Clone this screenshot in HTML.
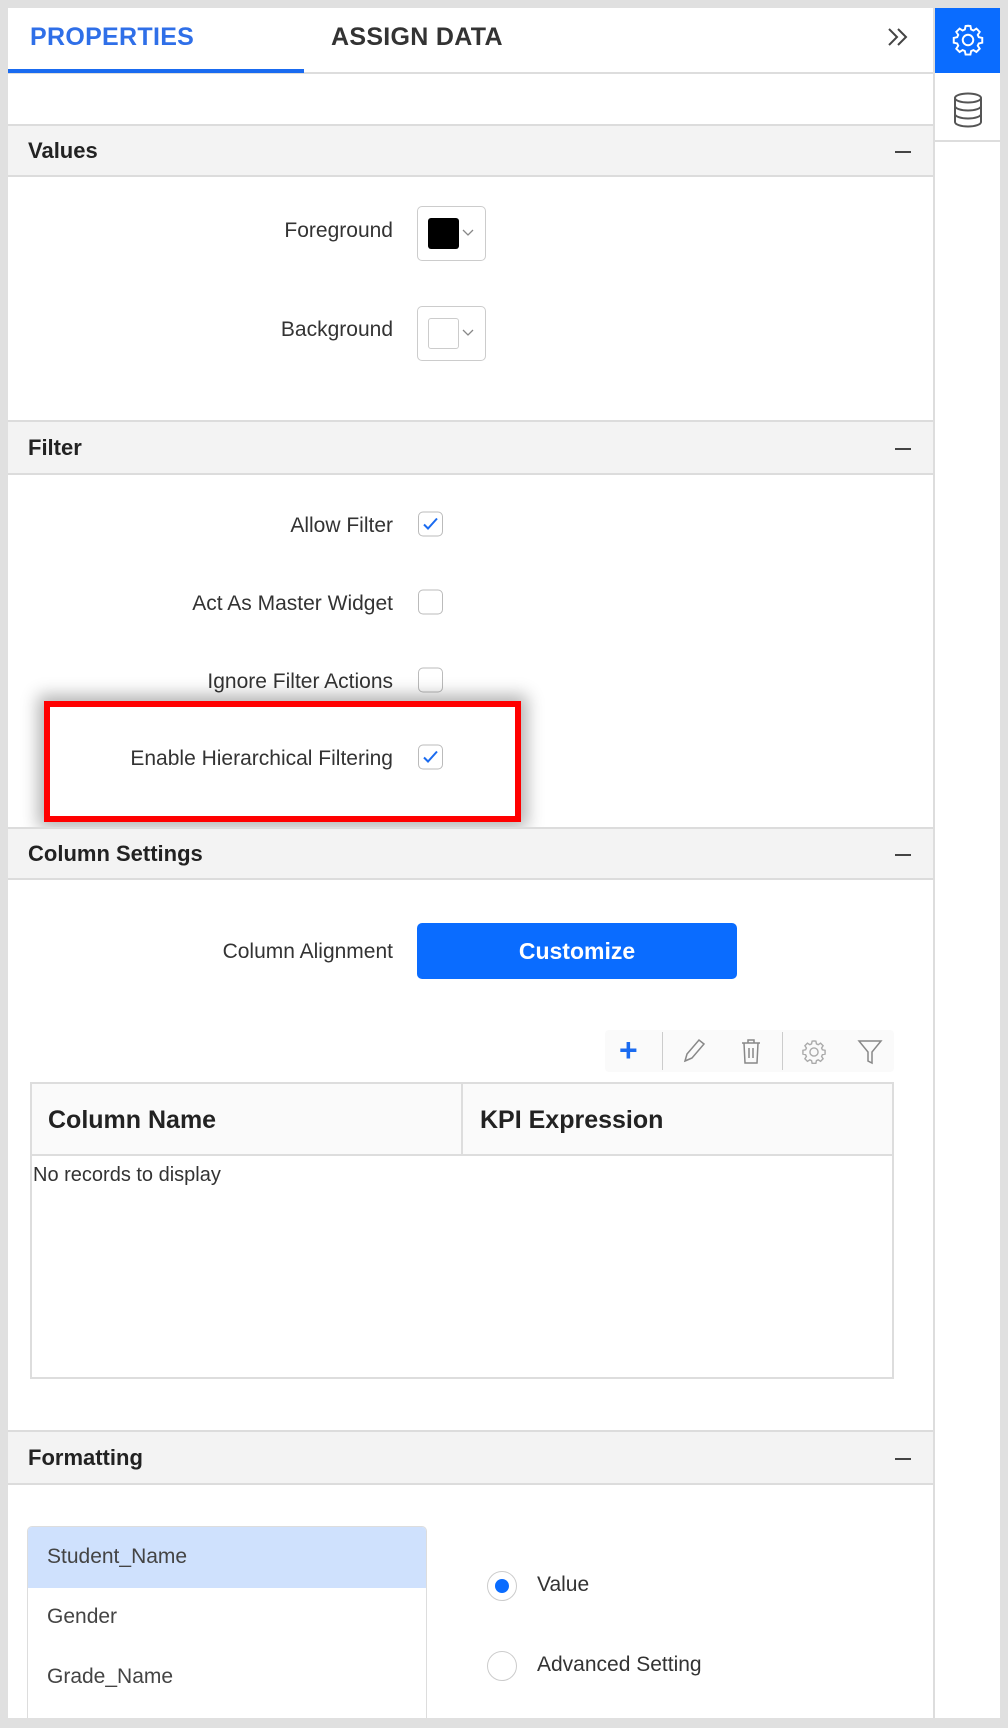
<!DOCTYPE html>
<html><head><meta charset="utf-8"><style>
*{box-sizing:border-box;margin:0;padding:0}
body{width:1008px;height:1728px;background:#e0e0e0;position:relative;overflow:hidden;font-family:"Liberation Sans",sans-serif;color:#333}
.a{position:absolute}
.panel{left:8px;top:8px;width:992px;height:1710px;background:#fff}
.hdr{position:absolute;left:8px;width:925px;background:#f3f3f3;border-top:2px solid #dcdcdc;border-bottom:2px solid #dcdcdc;font-weight:bold;font-size:22px;color:#222;padding-left:20px;display:flex;align-items:center}
.hdr:after{content:"";position:absolute;right:22px;top:50%;width:16px;height:2px;background:#444}
.lbl{position:absolute;right:615px;font-size:21px;color:#333;white-space:nowrap;transform:translateY(-50%)}
.cb{position:absolute;left:418px;width:25px;height:25px;border:1.5px solid #bbb;border-radius:5px;background:#fff;transform:translateY(-50%)}
.cb.on svg{position:absolute;left:3px;top:3px}
</style></head><body>
<div class="a panel"></div>
<!-- tabs -->
<div class="a" style="left:30px;top:23px;font-weight:bold;font-size:25px;color:#2f6fe8;letter-spacing:0.3px">PROPERTIES</div>
<div class="a" style="left:331px;top:23px;font-weight:bold;font-size:25px;color:#333;letter-spacing:0.3px">ASSIGN DATA</div>
<div class="a" style="left:8px;top:72px;width:925px;height:2px;background:#ddd"></div>
<div class="a" style="left:8px;top:69px;width:296px;height:4px;background:#1a6bf0"></div>
<svg class="a" style="left:886px;top:26px" width="26" height="22" viewBox="0 0 26 22"><path d="M3 3l8 8-8 8M12 3l8 8-8 8" fill="none" stroke="#444" stroke-width="2"/></svg>
<!-- sidebar -->
<div class="a" style="left:933px;top:8px;width:2px;height:1710px;background:#ddd"></div>
<div class="a" style="left:935px;top:8px;width:65px;height:65px;background:#0a6cff"></div>
<svg class="a" style="left:950px;top:22px" width="36" height="36" viewBox="0 0 24 24"><path d="M12 2.5l1.6.2.5 2.3 1.5.7 2-1.3 2.2 2.2-1.3 2 .7 1.5 2.3.5v3.2l-2.3.5-.7 1.5 1.3 2-2.2 2.2-2-1.3-1.5.7-.5 2.3h-3.2l-.5-2.3-1.5-.7-2 1.3-2.2-2.2 1.3-2-.7-1.5-2.3-.5v-3.2l2.3-.5.7-1.5-1.3-2 2.2-2.2 2 1.3 1.5-.7.5-2.3z" fill="none" stroke="#fff" stroke-width="1.3"/><circle cx="12" cy="12" r="3.5" fill="none" stroke="#fff" stroke-width="1.3"/></svg>
<svg class="a" style="left:952px;top:92px" width="32" height="36" viewBox="0 0 32 36"><ellipse cx="16" cy="6" rx="13" ry="4.5" fill="none" stroke="#555" stroke-width="2"/><path d="M3 6v24c0 2.5 6 4.5 13 4.5s13-2 13-4.5V6M3 14c0 2.5 6 4.5 13 4.5s13-2 13-4.5M3 22c0 2.5 6 4.5 13 4.5s13-2 13-4.5" fill="none" stroke="#555" stroke-width="2"/></svg>
<div class="a" style="left:935px;top:140px;width:65px;height:2px;background:#ddd"></div>

<!-- Values -->
<div class="hdr" style="top:124px;height:53px">Values</div>
<div class="lbl" style="top:231px">Foreground</div>
<div class="a" style="left:417px;top:206px;width:69px;height:55px;border:1.5px solid #ccc;border-radius:5px"></div>
<div class="a" style="left:428px;top:218px;width:31px;height:31px;background:#000;border-radius:3px"></div>
<svg class="a" style="left:461px;top:228px" width="14" height="10"><path d="M2 2l5 5 5-5" fill="none" stroke="#888" stroke-width="1.3"/></svg>
<div class="lbl" style="top:330px">Background</div>
<div class="a" style="left:417px;top:306px;width:69px;height:55px;border:1.5px solid #ccc;border-radius:5px"></div>
<div class="a" style="left:428px;top:318px;width:31px;height:31px;border:1.5px solid #ccc;border-radius:3px"></div>
<svg class="a" style="left:461px;top:328px" width="14" height="10"><path d="M2 2l5 5 5-5" fill="none" stroke="#888" stroke-width="1.3"/></svg>

<!-- Filter -->
<div class="hdr" style="top:420px;height:55px">Filter</div>
<div class="lbl" style="top:526px">Allow Filter</div>
<div class="cb on" style="top:524px"><svg width="17" height="17"><path d="M2 9l4 4 9-10" fill="none" stroke="#1a6bf0" stroke-width="2"/></svg></div>
<div class="lbl" style="top:604px">Act As Master Widget</div>
<div class="cb" style="top:602px"></div>
<div class="lbl" style="top:682px">Ignore Filter Actions</div>
<div class="cb" style="top:680px"></div>
<div class="a" style="left:44px;top:701px;width:477px;height:121px;border:6px solid #f00;box-shadow:0 0 16px 6px rgba(0,0,0,.3)"></div>
<div class="lbl" style="top:759px">Enable Hierarchical Filtering</div>
<div class="cb on" style="top:757px"><svg width="17" height="17"><path d="M2 9l4 4 9-10" fill="none" stroke="#1a6bf0" stroke-width="2"/></svg></div>

<!-- Column settings -->
<div class="hdr" style="top:827px;height:53px">Column Settings</div>
<div class="lbl" style="top:952px">Column Alignment</div>
<div class="a" style="left:417px;top:923px;width:320px;height:56px;background:#0a6cff;border-radius:5px;color:#fff;font-weight:bold;font-size:23px;display:flex;align-items:center;justify-content:center">Customize</div>
<div class="a" style="left:605px;top:1030px;width:289px;height:42px;background:#fafafa;border-radius:4px"></div>
<div class="a" style="left:619px;top:1031px;font-size:32px;font-weight:bold;color:#1a6bf0;line-height:38px">+</div>
<div class="a" style="left:662px;top:1032px;width:1px;height:38px;background:#ccc"></div>
<svg class="a" style="left:680px;top:1036px" width="28" height="30"><path d="M5 25l2-7L19 4l5 4-12 14z M5 25l7-3" fill="none" stroke="#888" stroke-width="1.5"/></svg>
<svg class="a" style="left:738px;top:1036px" width="26" height="30"><path d="M4 7h18M10 7V4h6v3M6 7l1 20h12l1-20M11 12v10M15 12v10" fill="none" stroke="#888" stroke-width="1.5"/></svg>
<div class="a" style="left:782px;top:1032px;width:1px;height:38px;background:#ccc"></div>
<svg class="a" style="left:800px;top:1038px" width="28" height="28" viewBox="0 0 24 24"><path d="M12 2.5l1.6.2.5 2.3 1.5.7 2-1.3 2.2 2.2-1.3 2 .7 1.5 2.3.5v3.2l-2.3.5-.7 1.5 1.3 2-2.2 2.2-2-1.3-1.5.7-.5 2.3h-3.2l-.5-2.3-1.5-.7-2 1.3-2.2-2.2 1.3-2-.7-1.5-2.3-.5v-3.2l2.3-.5.7-1.5-1.3-2 2.2-2.2 2 1.3 1.5-.7.5-2.3z" fill="none" stroke="#aaa" stroke-width="1.2"/><circle cx="12" cy="12" r="3.5" fill="none" stroke="#aaa" stroke-width="1.2"/></svg>
<svg class="a" style="left:857px;top:1038px" width="26" height="28"><path d="M2 3h22l-9 11v11l-4-2v-9z" fill="none" stroke="#888" stroke-width="1.5"/></svg>
<div class="a" style="left:30px;top:1082px;width:864px;height:297px;border:2px solid #ddd;background:#fff"></div>
<div class="a" style="left:32px;top:1084px;width:860px;height:72px;background:#fafafa;border-bottom:2px solid #ddd"></div>
<div class="a" style="left:461px;top:1084px;width:1.5px;height:72px;background:#ddd"></div>
<div class="a" style="left:48px;top:1106px;font-weight:bold;font-size:25px;color:#222">Column Name</div>
<div class="a" style="left:480px;top:1106px;font-weight:bold;font-size:25px;color:#222">KPI Expression</div>
<div class="a" style="left:33px;top:1164px;font-size:20px;color:#333">No records to display</div>

<!-- Formatting -->
<div class="hdr" style="top:1430px;height:55px">Formatting</div>
<div class="a" style="left:27px;top:1526px;width:400px;height:200px;border:1.5px solid #ddd;border-radius:5px 5px 0 0;overflow:hidden">
<div style="height:61px;background:#cfe1fd"></div></div>
<div class="a" style="left:47px;top:1545px;font-size:21px;color:#444">Student_Name</div>
<div class="a" style="left:47px;top:1605px;font-size:21px;color:#444">Gender</div>
<div class="a" style="left:47px;top:1665px;font-size:21px;color:#444">Grade_Name</div>
<div class="a" style="left:487px;top:1571px;width:30px;height:30px;border:1.5px solid #ccc;border-radius:50%"></div>
<div class="a" style="left:495px;top:1579px;width:14px;height:14px;background:#0a6cff;border-radius:50%"></div>
<div class="a" style="left:537px;top:1573px;font-size:21px;color:#333">Value</div>
<div class="a" style="left:487px;top:1651px;width:30px;height:30px;border:1.5px solid #ccc;border-radius:50%"></div>
<div class="a" style="left:537px;top:1653px;font-size:21px;color:#333">Advanced Setting</div>
<div class="a" style="left:0;top:1718px;width:1008px;height:10px;background:#e0e0e0"></div>
</body></html>
